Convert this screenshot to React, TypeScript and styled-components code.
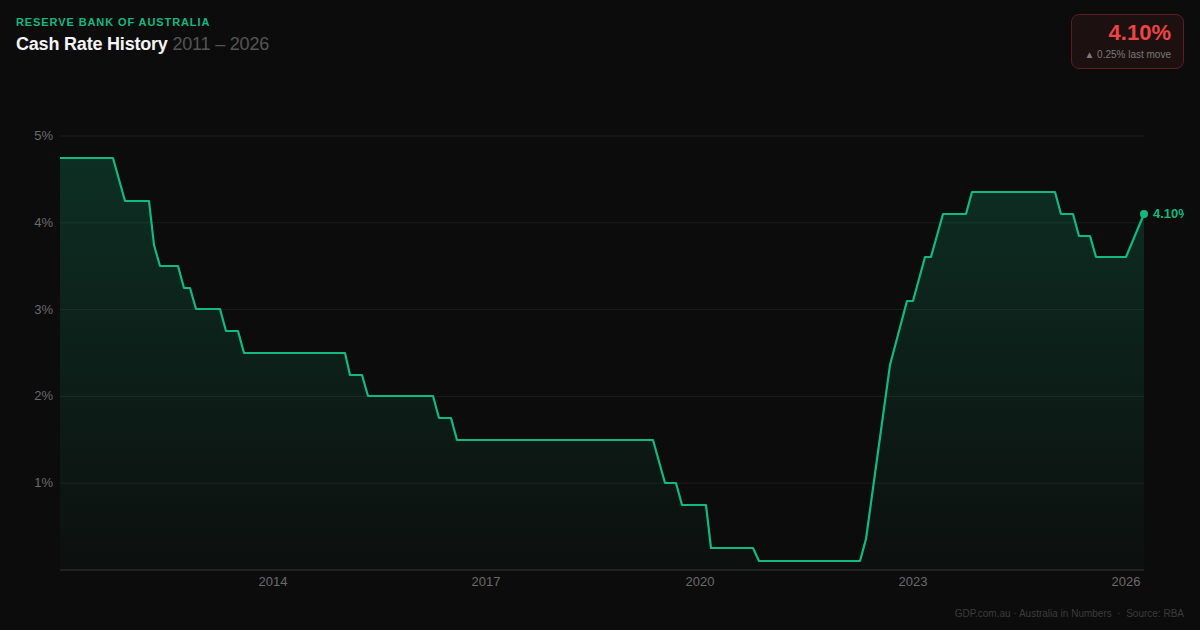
import React from 'react';
import styled, { createGlobalStyle } from 'styled-components';

const Global = createGlobalStyle`
  html, body { margin: 0; padding: 0; background: #0c0c0c; }
  body { font-family: "Liberation Sans", Arial, sans-serif; }
`;

const Page = styled.div`
  width: 1200px;
  height: 630px;
  background: #0c0c0c;
  display: flex;
  flex-direction: column;
  overflow: hidden;
`;

const Header = styled.header`
  height: 70px;
  box-sizing: border-box;
  padding: 14px 16px 0 16px;
  display: flex;
  justify-content: space-between;
  align-items: flex-start;
`;

const Kicker = styled.div`
  color: #10b981;
  font-size: 11px;
  font-weight: 700;
  letter-spacing: 0.9px;
  margin-top: 2px;
`;

const Title = styled.h1`
  margin: 6px 0 0;
  font-size: 18px;
  font-weight: 700;
  color: #f5f5f5;
  letter-spacing: -0.2px;
  span { color: #555; font-weight: 400; }
`;

const Badge = styled.div`
  border: 1px solid #5a1f22;
  background: #1c1011;
  border-radius: 8px;
  padding: 5px 12px 8px 12px;
  text-align: right;
`;

const BadgeValue = styled.div`
  color: #ef4444;
  font-size: 22px;
  font-weight: 700;
`;

const BadgeSub = styled.div`
  color: #7a7a7a;
  font-size: 10px;
  margin-top: 3px;
`;

const Chart = styled.svg`
  display: block;
  flex: none;
`;

const Footer = styled.footer`
  flex: 1;
  display: flex;
  align-items: center;
  justify-content: flex-end;
  padding: 0 16px 4px;
  color: #3c3c3c;
  font-size: 10px;
`;

const pts: [number, number][] = [
  [60, 158], [113, 158], [125, 201], [149, 201], [154, 245], [160, 266], [178, 266],
  [184, 288], [190, 288], [196, 309], [220, 309], [226, 331], [238, 331], [244, 353],
  [345, 353], [350, 375], [362, 375], [368, 396], [433, 396], [439, 418], [451, 418],
  [457, 440], [653, 440], [665, 483], [676, 483], [682, 505], [706, 505], [711, 548],
  [753, 548], [759, 561], [860, 561], [866, 539], [878, 452], [890, 365], [907, 301],
  [913, 301], [925, 257], [931, 257], [943, 214], [966, 214], [972, 192], [1055, 192],
  [1061, 214], [1073, 214], [1079, 236], [1090, 236], [1096, 257], [1126, 257], [1144, 214],
];

const line = pts.map(([x, y], i) => `${i ? 'L' : 'M'}${x} ${y}`).join(' ');
const area = `${line} L1144 570 L60 570 Z`;

const yTicks = [5, 4, 3, 2, 1];
const years = [
  [273, '2014'], [486, '2017'], [700, '2020'], [913, '2023'], [1126, '2026'],
] as const;

export default function App() {
  return (
    <Page>
      <Global />
      <Header>
        <div>
          <Kicker>RESERVE BANK OF AUSTRALIA</Kicker>
          <Title>Cash Rate History <span>2011 – 2026</span></Title>
        </div>
        <Badge>
          <BadgeValue>4.10%</BadgeValue>
          <BadgeSub>▲ 0.25% last move</BadgeSub>
        </Badge>
      </Header>
      <Chart width={1200} height={530} viewBox="0 70 1200 530">
        <defs>
          <linearGradient id="fill" x1="0" y1="0" x2="0" y2="1">
            <stop offset="0%" stopColor="#10b981" stopOpacity="0.2" />
            <stop offset="100%" stopColor="#10b981" stopOpacity="0.02" />
          </linearGradient>
          <clipPath id="clip">
            <rect x="0" y="70" width="1184" height="530" />
          </clipPath>
        </defs>
        {yTicks.map((v) => {
          const y = 570 - 86.8 * v;
          return (
            <g key={v}>
              <line x1={60} x2={1144} y1={y} y2={y} stroke="#1c1c1c" />
              <text x={53} y={y + 4} textAnchor="end" fill="#6b6b6b" fontSize="13">{v}%</text>
            </g>
          );
        })}
        <path d={area} fill="url(#fill)" />
        <line x1={60} x2={1144} y1={570} y2={570} stroke="#2a2a2a" strokeWidth="1.5" />
        <path d={line} fill="none" stroke="#10b981" strokeWidth="2.2" strokeLinejoin="round" />
        {years.map(([x, t]) => (
          <text key={t} x={x} y={586} textAnchor="middle" fill="#6b6b6b" fontSize="13">{t}</text>
        ))}
        <circle cx={1144} cy={214} r={4} fill="#10b981" />
        <g clipPath="url(#clip)">
          <text x={1153} y={218} fill="#10b981" fontSize="13" fontWeight="700">4.10%</text>
        </g>
      </Chart>
      <Footer>GDP.com.au · Australia in Numbers &nbsp;·&nbsp; Source: RBA</Footer>
    </Page>
  );
}
